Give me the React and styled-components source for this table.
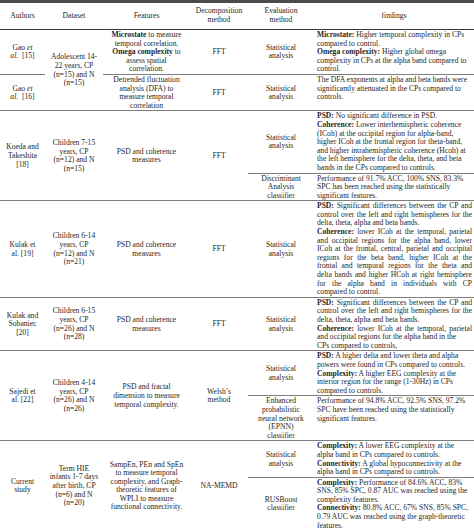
import React from 'react';
import styled, { createGlobalStyle } from 'styled-components';

const Global = createGlobalStyle`
  html, body { margin: 0; padding: 0; background: #ffffff; }
  body {
    font-family: "Liberation Serif", "Times New Roman", serif;
    color: #1f1f1f;
  }
`;

const COLS = '45px 58px 87px 58px 66px 160px';

const Table = styled.div`
  width: 474px;
  font-size: 7.6px;
  line-height: 8.6px;
`;

const Header = styled.div`
  display: grid;
  grid-template-columns: ${COLS};
  height: 26px;
  border-top: 3px solid #4b4b4b;
  border-bottom: 1px solid #3a3a3a;
`;

const HeadCell = styled.div`
  display: flex;
  align-items: center;
  justify-content: center;
  text-align: center;
`;

const Body = styled.div`
  display: grid;
  grid-template-columns: ${COLS};
`;

const Cell = styled.div`
  grid-column: ${(p) => p.$col};
  grid-row: ${(p) => p.$row} / span ${(p) => p.$span || 1};
  display: flex;
  flex-direction: column;
  justify-content: center;
  align-items: center;
  text-align: center;
  padding: 1px 2px 0;
  border-bottom: ${(p) => (p.$open ? 'none' : '1px solid #7e7e7e')};
`;

const Findings = styled.div`
  grid-column: 6;
  grid-row: ${(p) => p.$row};
  display: flex;
  flex-direction: column;
  justify-content: flex-start;
  padding: 1px 2px 0 3px;
  border-bottom: ${(p) => (p.$open ? 'none' : '1px solid #7e7e7e')};
`;

const Line = styled.div`
  white-space: nowrap;
  text-align: ${(p) => (p.$justify ? 'justify' : 'left')};
  text-align-last: ${(p) => (p.$justify ? 'justify' : 'left')};
`;

const B = styled.b`
  font-weight: 700;
`;

const I = styled.i`
  font-style: italic;
`;

const Lines = ({ items }) =>
  items.map((t, i) => (
    <React.Fragment key={i}>
      {i > 0 && <br />}
      {t}
    </React.Fragment>
  ));

const Para = ({ lines, justify }) =>
  lines.map((l, i) => (
    <Line key={i} $justify={justify && justify.includes(i)}>
      {l}
    </Line>
  ));

const STAT = ['Statistical', 'analysis'];
const PSDCOH = ['PSD and coherence', 'measures'];

export default function App() {
  return (
    <>
      <Global />
      <Table>
        <Header>
          <HeadCell>Authors</HeadCell>
          <HeadCell>Dataset</HeadCell>
          <HeadCell>Features</HeadCell>
          <HeadCell>
            Decomposition
            <br />
            method
          </HeadCell>
          <HeadCell>
            Evaluation
            <br />
            method
          </HeadCell>
          <HeadCell>findings</HeadCell>
        </Header>

        <Body>
          {/* Gao [15] */}
          <Cell $col={1} $row={1}>
            <div>
              Gao <I>et</I>
              <br />
              <I>al.</I>&nbsp; [15]
            </div>
          </Cell>
          <Cell $col={2} $row={1} $span={2}>
            <div>
              <Lines items={['Adolescent 14-', '22 years, CP', '(n=15) and N', '(n=15)']} />
            </div>
          </Cell>
          <Cell $col={3} $row={1}>
            <div>
              <B>Microstate</B> to measure
              <br />
              temporal correlation.
              <br />
              <B>Omega complexity</B> to
              <br />
              assess spatial
              <br />
              correlation.
            </div>
          </Cell>
          <Cell $col={4} $row={1}>FFT</Cell>
          <Cell $col={5} $row={1}>
            <div>
              <Lines items={STAT} />
            </div>
          </Cell>
          <Findings $row={1}>
            <Para
              lines={[
                <><B>Microstate:</B> Higher temporal complexity in CPs</>,
                'compared to control.',
                <><B>Omega complexity:</B> Higher global omega</>,
                'complexity in CPs at the alpha band compared to',
                'control.',
              ]}
            />
          </Findings>

          {/* Gao [16] */}
          <Cell $col={1} $row={2}>
            <div>
              Gao <I>et</I>
              <br />
              <I>al.</I>&nbsp; [16]
            </div>
          </Cell>
          <Cell $col={3} $row={2}>
            <div>
              <Lines items={['Detrended fluctuation', 'analysis (DFA) to', 'measure temporal', 'correlation']} />
            </div>
          </Cell>
          <Cell $col={4} $row={2}>FFT</Cell>
          <Cell $col={5} $row={2}>
            <div>
              <Lines items={STAT} />
            </div>
          </Cell>
          <Findings $row={2}>
            <Para
              lines={[
                'The DFA exponents at alpha and beta bands were',
                'significantly attenuated in the CPs compared to',
                'controls.',
              ]}
            />
          </Findings>

          {/* Koeda */}
          <Cell $col={1} $row={3} $span={2}>
            <div>
              <Lines items={['Koeda and', 'Takeshita', '[18]']} />
            </div>
          </Cell>
          <Cell $col={2} $row={3} $span={2}>
            <div>
              <Lines items={['Children 7-15', 'years, CP', '(n=12) and N', '(n=15)']} />
            </div>
          </Cell>
          <Cell $col={3} $row={3} $span={2}>
            <div>
              <Lines items={PSDCOH} />
            </div>
          </Cell>
          <Cell $col={4} $row={3} $span={2}>FFT</Cell>
          <Cell $col={5} $row={3}>
            <div>
              <Lines items={STAT} />
            </div>
          </Cell>
          <Findings $row={3}>
            <Para
              lines={[
                <><B>PSD:</B> No significant difference in PSD.</>,
                <><B>Coherence:</B> Lower interhemispheric coherence</>,
                '(ICoh) at the occipital region for alpha-band,',
                'higher ICoh at the frontal region for theta-band,',
                'and higher intrahemispheric coherence (Hcoh) at',
                'the left hemisphere for the delta, theta, and beta',
                'bands in the CPs compared to controls.',
              ]}
            />
          </Findings>
          <Cell $col={5} $row={4}>
            <div>
              <Lines items={['Discriminant', 'Analysis', 'classifier']} />
            </div>
          </Cell>
          <Findings $row={4}>
            <Para
              lines={[
                'Performance of 91.7% ACC, 100% SNS, 83.3%',
                'SPC has been reached using the statistically',
                'significant features.',
              ]}
            />
          </Findings>

          {/* Kulak [19] */}
          <Cell $col={1} $row={5}>
            <div>
              <Lines items={['Kulak et', 'al. [19]']} />
            </div>
          </Cell>
          <Cell $col={2} $row={5}>
            <div>
              <Lines items={['Children 6-14', 'years, CP', '(n=12) and N', '(n=21)']} />
            </div>
          </Cell>
          <Cell $col={3} $row={5}>
            <div>
              <Lines items={PSDCOH} />
            </div>
          </Cell>
          <Cell $col={4} $row={5}>FFT</Cell>
          <Cell $col={5} $row={5}>
            <div>
              <Lines items={STAT} />
            </div>
          </Cell>
          <Findings $row={5}>
            <Para
              justify={[0, 1, 3, 4, 5, 6, 7, 8, 9]}
              lines={[
                <><B>PSD:</B> Significant differences between the CP and</>,
                'control over the left and right hemispheres for the',
                'delta, theta, alpha and beta bands.',
                <><B>Coherence:</B> lower ICoh at the temporal, parietal</>,
                'and occipital regions for the alpha band, lower',
                'ICoh at the frontal, central, parietal and occipital',
                'regions for the beta band, higher ICoh at the',
                'frontal and temporal regions for the theta and',
                'delta bands and higher HCoh at right hemisphere',
                'for the alpha band in individuals with CP',
                'compared to control.',
              ]}
            />
          </Findings>

          {/* Kulak [20] */}
          <Cell $col={1} $row={6}>
            <div>
              <Lines items={['Kulak and', 'Sobaniec', '[20]']} />
            </div>
          </Cell>
          <Cell $col={2} $row={6}>
            <div>
              <Lines items={['Children 6-15', 'years, CP', '(n=26) and N', '(n=28)']} />
            </div>
          </Cell>
          <Cell $col={3} $row={6}>
            <div>
              <Lines items={PSDCOH} />
            </div>
          </Cell>
          <Cell $col={4} $row={6}>FFT</Cell>
          <Cell $col={5} $row={6}>
            <div>
              <Lines items={STAT} />
            </div>
          </Cell>
          <Findings $row={6}>
            <Para
              justify={[0, 1, 3]}
              lines={[
                <><B>PSD:</B> Significant differences between the CP and</>,
                'control over the left and right hemispheres for the',
                'delta, theta, alpha and beta bands.',
                <><B>Coherence:</B> lower ICoh at the temporal, parietal</>,
                'and occipital regions for the alpha band in the',
                'CPs compared to controls,',
              ]}
            />
          </Findings>

          {/* Sajedi */}
          <Cell $col={1} $row={7} $span={2}>
            <div>
              <Lines items={['Sajedi et', 'al. [22]']} />
            </div>
          </Cell>
          <Cell $col={2} $row={7} $span={2}>
            <div>
              <Lines items={['Children 4-14', 'years, CP', '(n=26) and N', '(n=26)']} />
            </div>
          </Cell>
          <Cell $col={3} $row={7} $span={2}>
            <div>
              <Lines items={['PSD and fractal', 'dimension to measure', 'temporal complexity.']} />
            </div>
          </Cell>
          <Cell $col={4} $row={7} $span={2}>
            <div>
              <Lines items={['Welsh\u2019s', 'method']} />
            </div>
          </Cell>
          <Cell $col={5} $row={7}>
            <div>
              <Lines items={STAT} />
            </div>
          </Cell>
          <Findings $row={7}>
            <Para
              lines={[
                <><B>PSD:</B> A higher delta and lower theta and alpha</>,
                'powers were found in CPs compared to controls.',
                <><B>Complexity:</B> A higher EEG complexity at the</>,
                'interior region for the range (1-30Hz) in CPs',
                'compared to controls.',
              ]}
            />
          </Findings>
          <Cell $col={5} $row={8}>
            <div>
              <Lines items={['Enhanced', 'probabilistic', 'neural network', '(EPNN)', 'classifier']} />
            </div>
          </Cell>
          <Findings $row={8}>
            <Para
              lines={[
                'Performance of 94.8% ACC, 92.5% SNS, 97.2%',
                'SPC have been reached using the statistically',
                'significant features.',
              ]}
            />
          </Findings>

          {/* Current study */}
          <Cell $col={1} $row={9} $span={2} $open>
            <div>
              <Lines items={['Current', 'study']} />
            </div>
          </Cell>
          <Cell $col={2} $row={9} $span={2} $open>
            <div>
              <Lines items={['Term HIE', 'infants 1-7 days', 'after birth, CP', '(n=6) and N', '(n=20)']} />
            </div>
          </Cell>
          <Cell $col={3} $row={9} $span={2} $open>
            <div>
              <Lines
                items={[
                  'SampEn, PEn and SpEn',
                  'to measure temporal',
                  'complexity, and Graph-',
                  'theoretic features of',
                  'WPLI to measure',
                  'functional connectivity.',
                ]}
              />
            </div>
          </Cell>
          <Cell $col={4} $row={9} $span={2} $open>NA-MEMD</Cell>
          <Cell $col={5} $row={9}>
            <div>
              <Lines items={STAT} />
            </div>
          </Cell>
          <Findings $row={9}>
            <Para
              lines={[
                <><B>Complexity:</B> A lower EEG complexity at the</>,
                'alpha band in CPs compared to controls.',
                <><B>Connectivity:</B> A global hypoconnectivity at the</>,
                'alpha band in CPs compared to controls.',
              ]}
            />
          </Findings>
          <Cell $col={5} $row={10} $open>
            <div>
              <Lines items={['RUSBoost', 'classifier']} />
            </div>
          </Cell>
          <Findings $row={10} $open>
            <Para
              lines={[
                <><B>Complexity:</B> Performance of 84.6% ACC, 83%</>,
                'SNS, 85% SPC, 0.87 AUC was reached using the',
                'complexity features.',
                <><B>Connectivity:</B> 80.8% ACC, 67% SNS, 85% SPC,</>,
                '0.79 AUC was reached using the graph-theoretic',
                'features.',
              ]}
            />
          </Findings>
        </Body>
      </Table>
    </>
  );
}
